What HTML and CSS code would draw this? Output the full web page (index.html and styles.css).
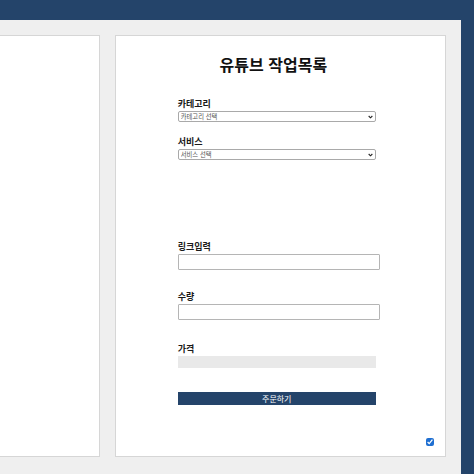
FILE: index.html
```html
<!DOCTYPE html>
<html lang="ko">
<head>
<meta charset="utf-8">
<title>유튜브 작업목록</title>
<link rel="stylesheet" href="styles.css">
</head>
<body>
<div class="topbar"></div>
<div class="stage">
  <div class="panel panel-left"></div>
  <div class="panel panel-right">
    <h1 class="title">유튜브 작업목록</h1>
    <form class="order-form">
      <label class="label">카테고리</label>
      <div class="select-wrap">
        <select class="select"><option>카테고리 선택</option></select>
        <svg class="chev" viewBox="0 0 6 4" width="5" height="4"><path d="M0.8 0.8 L3 3 L5.2 0.8" fill="none" stroke="#222" stroke-width="1.3"/></svg>
      </div>

      <label class="label label-service">서비스</label>
      <div class="select-wrap">
        <select class="select"><option>서비스 선택</option></select>
        <svg class="chev" viewBox="0 0 6 4" width="5" height="4"><path d="M0.8 0.8 L3 3 L5.2 0.8" fill="none" stroke="#222" stroke-width="1.3"/></svg>
      </div>

      <label class="label label-link">링크입력</label>
      <input class="text-input" type="text">

      <label class="label label-qty">수량</label>
      <input class="text-input" type="text">

      <label class="label label-price">가격</label>
      <div class="price-box"></div>

      <button type="button" class="order-btn">주문하기</button>
    </form>
    <div class="panel-footer">
      <input type="checkbox" class="check" checked>
    </div>
  </div>
</div>
</body>
</html>
```

FILE: styles.css
```css
html, body {
  margin: 0;
  padding: 0;
}
body {
  background: #24446a;
  width: 474px;
  height: 474px;
  overflow: hidden;
  font-family: "Noto Sans CJK KR", "Noto Sans", sans-serif;
  color: #111;
}
.topbar {
  height: 20px;
}
.stage {
  width: 461px;
  height: 454px;
  background: #efefef;
  box-sizing: border-box;
  padding: 15px 15px 0 0;
  display: flex;
  gap: 15px;
  align-items: flex-start;
}
.panel {
  background: #fff;
  border: 1px solid #d6d6d6;
  height: 422px;
  box-sizing: border-box;
}
.panel-left {
  width: 100px;
  border-left: none;
}
.panel-right {
  width: 332px;
  display: flex;
  flex-direction: column;
}
.title {
  margin: 18px 0 0 0;
  font-size: 16px;
  line-height: 20px;
  font-weight: 700;
  text-align: center;
  padding-right: 14px;
}
.order-form {
  margin: 24px 0 0 62px;
  width: 202px;
  display: flex;
  flex-direction: column;
  align-items: flex-start;
}
.label {
  font-size: 9px;
  line-height: 11px;
  font-weight: 700;
  color: #1a1a1a;
  margin-bottom: 2px;
}
.label-service { margin-top: 14px; }
.label-link { margin-top: 81px; }
.label-qty { margin-top: 21px; }
.label-price { margin-top: 23px; }
.select-wrap {
  position: relative;
  width: 198px;
  height: 11px;
}
.select {
  appearance: none;
  -webkit-appearance: none;
  display: block;
  width: 198px;
  height: 11px;
  box-sizing: border-box;
  font-family: "Noto Sans CJK KR", sans-serif;
  font-size: 6.3px;
  line-height: 9px;
  padding: 0 0 0 2px;
  border: 1px solid #a9a9a9;
  border-radius: 2px;
  background: #fff;
  color: #555;
  margin: 0;
}
.chev {
  position: absolute;
  right: 3px;
  top: 4px;
  pointer-events: none;
}
.text-input {
  width: 202px;
  height: 16px;
  box-sizing: border-box;
  border: 1px solid #b5b5b5;
  border-radius: 1px;
  margin: 0;
  padding: 0;
  background: #fff;
}
.price-box {
  width: 198px;
  height: 12px;
  background: #e9e9e9;
}
.order-btn {
  margin-top: 24px;
  width: 198px;
  height: 13px;
  padding: 0;
  border: none;
  background: #24446a;
  color: #fff;
  font-family: "Noto Sans CJK KR", sans-serif;
  font-size: 8px;
  line-height: 13px;
}
.panel-footer {
  margin-top: auto;
  display: flex;
  justify-content: flex-end;
  padding: 0 11px 10px 0;
}
.check {
  width: 8px;
  height: 8px;
  margin: 0;
  accent-color: #1f6fd1;
}
```
